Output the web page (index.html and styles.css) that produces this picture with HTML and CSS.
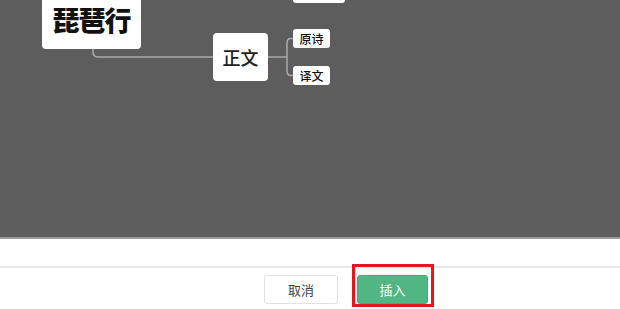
FILE: index.html
```html
<!doctype html>
<html>
<head>
  <title>插入思维导图</title>
  <link rel="stylesheet" href="styles.css">
</head>
<body>
  <div id="canvas">
    <svg class="links" width="620" height="237">
      <path d="M93 49 L93 52 Q93 57 98 57 L213 57" />
      <path d="M268 57 L287 57" />
      <path d="M293 38.5 L291 38.5 Q287 38.5 287 43 L287 71 Q287 75.5 291 75.5 L293 75.5" />
    </svg>
    <div class="node root">琵琶行</div>
    <div class="node main">正文</div>
    <div class="node leaf top"></div>
    <div class="node leaf first">原诗</div>
    <div class="node leaf second">译文</div>
  </div>

  <div id="footer">
    <div class="actions">
      <button class="btn cancel">取消</button>
      <button class="btn insert">插入<span class="mark"></span></button>
    </div>
  </div>
</body>
</html>
```

FILE: styles.css
```css
body {
  margin: 0;
  width: 620px;
  height: 309px;
  overflow: hidden;
  background: #fff;
  font-family: "Noto Sans CJK SC", "Noto Sans", sans-serif;
}

#canvas {
  position: relative;
  height: 237px;
  background: #5d5d5d;
  border-bottom: 2px solid #9a9a9a;
}

.links {
  position: absolute;
  left: 0;
  top: 0;
}

.links path {
  fill: none;
  stroke: #a9a9a9;
  stroke-width: 1.5;
}

.node {
  position: absolute;
  background: #fff;
  border-radius: 4px;
  color: #111;
  display: flex;
  align-items: center;
  justify-content: center;
}

.root {
  left: 42px;
  top: -10px;
  width: 99px;
  height: 59px;
  font-size: 27px;
  font-weight: 900;
  letter-spacing: -1px;
}

.main {
  left: 213px;
  top: 33px;
  width: 55px;
  height: 48px;
  font-size: 18px;
  font-weight: 500;
  color: #222;
}

.leaf {
  left: 293px;
  width: 37px;
  height: 19px;
  font-size: 12px;
  font-weight: 500;
  border-radius: 3px;
}

.leaf.top {
  top: -16px;
  width: 52px;
}

.leaf.first {
  top: 29px;
}

.leaf.second {
  top: 66px;
}

#footer {
  padding-top: 27px;
}

.actions {
  border-top: 2px solid #e8e8e8;
  display: flex;
  padding: 7px 0 0 264px;
}

.btn {
  height: 29px;
  border-radius: 3px;
  font-family: inherit;
  font-size: 13px;
}

.cancel {
  width: 74px;
  background: #fff;
  border: 1px solid #e2e2e2;
  color: #444;
}

.insert {
  position: relative;
  width: 71px;
  margin-left: 19px;
  background: #52b584;
  border: 1px solid #4aa877;
  color: #fff;
}

.mark {
  position: absolute;
  left: -6px;
  top: -12px;
  width: 76px;
  height: 37px;
  border: 3px solid #e8141c;
}
```
